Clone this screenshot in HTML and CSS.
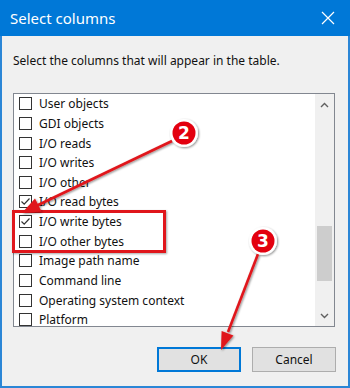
FILE: index.html
```html
<!DOCTYPE html>
<html>
<head>
<meta charset="utf-8">
<link rel="stylesheet" href="styles.css">
</head>
<body>
<div class="window">
  <div class="titlebar">
    <span class="title">Select columns</span>
    <svg class="close" width="14" height="14" viewBox="0 0 14 14"><path d="M1 1 L13 13 M13 1 L1 13" stroke="#fff" stroke-width="1.2" fill="none"/></svg>
  </div>
  <div class="content">
    <p class="intro">Select the columns that will appear in the table.</p>
    <div class="listbox">
      <div class="items">
        <div class="row"><span class="cb"></span>User objects</div>
        <div class="row"><span class="cb"></span>GDI objects</div>
        <div class="row"><span class="cb"></span>I/O reads</div>
        <div class="row"><span class="cb"></span>I/O writes</div>
        <div class="row"><span class="cb"></span>I/O other</div>
        <div class="row"><span class="cb checked"><svg width="11" height="11" viewBox="0 0 11 11"><path d="M1.5 5.5 L4.2 8.2 L9.5 2.5" stroke="#333" stroke-width="1.2" fill="none"/></svg></span>I/O read bytes</div>
        <div class="row"><span class="cb checked"><svg width="11" height="11" viewBox="0 0 11 11"><path d="M1.5 5.5 L4.2 8.2 L9.5 2.5" stroke="#333" stroke-width="1.2" fill="none"/></svg></span>I/O write bytes</div>
        <div class="row"><span class="cb"></span>I/O other bytes</div>
        <div class="row"><span class="cb"></span>Image path name</div>
        <div class="row"><span class="cb"></span>Command line</div>
        <div class="row"><span class="cb"></span>Operating system context</div>
        <div class="row"><span class="cb"></span>Platform</div>
      </div>
      <div class="scrollbar">
        <svg class="arrow" width="9" height="6" viewBox="0 0 9 6"><path d="M1 5 L4.5 1.5 L8 5" stroke="#606060" stroke-width="1.4" fill="none"/></svg>
        <div class="track"><div class="thumb"></div></div>
        <svg class="arrow" width="9" height="6" viewBox="0 0 9 6"><path d="M1 1 L4.5 4.5 L8 1" stroke="#606060" stroke-width="1.4" fill="none"/></svg>
      </div>
    </div>
    <div class="buttons">
      <button class="btn default">OK</button>
      <button class="btn">Cancel</button>
    </div>
  </div>
</div>
<div class="highlight"></div>
<svg class="overlay" width="350" height="388" viewBox="0 0 350 388">
  <defs>
    <filter id="sh" x="-50%" y="-50%" width="200%" height="200%">
      <feDropShadow dx="1" dy="1" stdDeviation="1" flood-color="#000" flood-opacity="0.45"/>
    </filter>
  </defs>
  <g filter="url(#sh)">
    <line x1="172" y1="141" x2="36" y2="206" stroke="#e0161b" stroke-width="2.6"/>
    <polygon points="22,213 41.5,211.5 35,198.6" fill="#e0161b"/>
    <line x1="258" y1="254" x2="228" y2="332" stroke="#e0161b" stroke-width="2.6"/>
    <polygon points="221,350 233.4,335.4 221.6,331" fill="#e0161b"/>
    <circle cx="184" cy="133" r="14" fill="#fff"/>
    <circle cx="263" cy="241" r="14" fill="#fff"/>
  </g>
  <circle cx="184" cy="133" r="11.5" fill="#e3000f"/>
  <circle cx="263" cy="241" r="11.5" fill="#e3000f"/>
  <text x="184" y="139" class="num">2</text>
  <text x="263" y="247" class="num">3</text>
</svg>
</body>
</html>
```

FILE: styles.css
```css
html, body {
  margin: 0;
  padding: 0;
}
body {
  width: 350px;
  height: 388px;
  position: relative;
  overflow: hidden;
  font-family: "Noto Sans", "Open Sans", sans-serif;
  background: #f0f0f0;
}
.window {
  width: 350px;
  height: 388px;
  display: flex;
  flex-direction: column;
  box-sizing: border-box;
}
.titlebar {
  height: 36px;
  background: #0078d7;
  display: flex;
  align-items: center;
  justify-content: space-between;
  padding: 0 15px 0 10px;
  flex: none;
}
.title {
  color: #fff;
  font-size: 15px;
  margin-top: -1px;
}
.close {
  display: block;
}
.content {
  flex: 1;
  background: #f0f0f0;
  border: 2px solid #2b86d6;
  border-top: 0;
  padding: 0 13px 0 11px;
  display: flex;
  flex-direction: column;
}
.intro {
  margin: 16px 0 0 0;
  font-size: 12px;
  line-height: 17px;
  color: #111;
}
.listbox {
  margin-top: 24px;
  height: 234px;
  box-sizing: border-box;
  border: 1px solid #828790;
  background: #fff;
  display: flex;
  overflow: hidden;
  flex: none;
}
.items {
  flex: 1;
  overflow: hidden;
}
.row {
  height: 19.64px;
  display: flex;
  align-items: center;
  font-size: 12px;
  color: #111;
  white-space: nowrap;
}
.cb {
  width: 13px;
  height: 13px;
  box-sizing: border-box;
  border: 1px solid #333;
  background: #fff;
  margin: 0 7px 0 5px;
  display: flex;
  align-items: center;
  justify-content: center;
  flex: none;
}
.cb svg {
  display: block;
}
.scrollbar {
  width: 19px;
  background: #f0f0f0;
  display: flex;
  flex-direction: column;
  align-items: center;
  padding: 8px 0 7px;
  box-sizing: border-box;
}
.arrow {
  display: block;
  flex: none;
}
.track {
  flex: 1;
  width: 100%;
  position: relative;
}
.thumb {
  position: absolute;
  left: 2px;
  right: 2px;
  top: 118px;
  height: 55px;
  background: #cdcdcd;
}
.buttons {
  margin-top: 20px;
  display: flex;
  justify-content: flex-end;
  gap: 11px;
  margin-right: -1px;
}
.btn {
  width: 84px;
  height: 25px;
  box-sizing: border-box;
  background: #e1e1e1;
  border: 1px solid #adadad;
  font-family: "Noto Sans", "Open Sans", sans-serif;
  font-size: 12px;
  color: #111;
  padding: 0;
}
.btn.default {
  border: 2px solid #0078d7;
}
.highlight {
  position: absolute;
  left: 12px;
  top: 210px;
  width: 148px;
  height: 37px;
  border: 3px solid #e0161b;
  box-shadow: 1px 1px 2px rgba(0,0,0,0.35);
}
.overlay {
  position: absolute;
  left: 0;
  top: 0;
}
.num {
  fill: #fff;
  font-family: "DejaVu Sans", sans-serif;
  font-weight: bold;
  font-size: 17px;
  text-anchor: middle;
}
```
